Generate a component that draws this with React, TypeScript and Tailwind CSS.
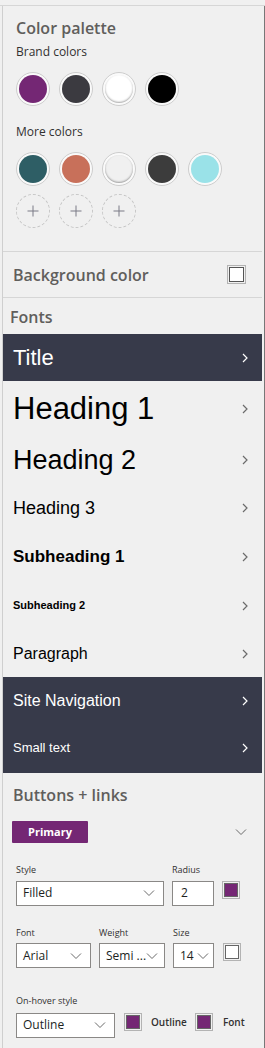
import React from "react";

const ui = { fontFamily: '"Open Sans", "Noto Sans", sans-serif' };
const arial = { fontFamily: '"Liberation Sans", Arial, sans-serif' };

const brand = ["#742774", "#3b3a40", "#ffffff", "#000000"];
const more = ["#2e5e65", "#c8705a", "#f0f0f0", "#3c3c3c", "#9ae2e8"];

const Chevron: React.FC<{ light?: boolean }> = ({ light }) => (
  <svg width="8" height="12" viewBox="0 0 8 12" className="shrink-0">
    <polyline
      points="2,2 6,6 2,10"
      fill="none"
      stroke={light ? "#ffffff" : "#6b6b6b"}
      strokeWidth="1.2"
    />
  </svg>
);

const ChevronDown: React.FC = () => (
  <svg width="12" height="8" viewBox="0 0 12 8" className="shrink-0">
    <polyline points="1,1.5 6,6.5 11,1.5" fill="none" stroke="#6b6b6b" strokeWidth="1" />
  </svg>
);

const Swatch: React.FC<{ color: string }> = ({ color }) => (
  <div className="w-[34px] h-[34px] rounded-full border border-[#cdcdcd] bg-[#fafafa] p-[2px]">
    <div
      className={
        color === "#ffffff" || color === "#f0f0f0"
          ? "w-full h-full rounded-full shadow-[inset_0_-1px_2px_rgba(0,0,0,0.35)]"
          : "w-full h-full rounded-full"
      }
      style={{ background: color }}
    />
  </div>
);

const AddSwatch: React.FC = () => (
  <div className="w-[34px] h-[34px] rounded-full border border-dashed border-[#c6c6c6] flex items-center justify-center">
    <svg width="12" height="12" viewBox="0 0 12 12">
      <path d="M6 0.5V11.5M0.5 6H11.5" stroke="#7a7a86" strokeWidth="1" />
    </svg>
  </div>
);

const FontRow: React.FC<{
  label: string;
  h: string;
  cls: string;
  dark?: boolean;
}> = ({ label, h, cls, dark }) => (
  <div className={`flex items-center justify-between pl-[10px] pr-[13px] ${h}`}>
    <span className={`${cls} ${dark ? "text-white" : "text-black"}`} style={arial}>
      {label}
    </span>
    <Chevron light={dark} />
  </div>
);

const Select: React.FC<{ value: string; w: string; px?: string }> = ({ value, w, px }) => (
  <div
    className={`${w} ${px ?? "pl-[6px] pr-[8px]"} h-[25px] bg-white border border-[#8a8886] flex items-center justify-between text-[12px] text-[#201f1e] whitespace-nowrap`}
  >
    <span>{value}</span>
    <ChevronDown />
  </div>
);

const ColorBox: React.FC<{ color: string }> = ({ color }) => (
  <div className="w-[18px] h-[18px] border border-[#b3b3b3] p-[1px] bg-[#f0f0f0]">
    <div className="w-full h-full border border-[#666]" style={{ background: color }} />
  </div>
);

export default function App() {
  return (
    <div className="w-[265px] h-[1048px] bg-[#f0f0f0] overflow-hidden pt-[5px]" style={ui}>
      <div className="border-t border-[#d6d6d6] h-full pl-[2px]">
        <div className="h-full border-l border-[#cfcfcf] border-r border-r-[#777777]">
          {/* palette */}
          <div className="pl-[13px] pt-[11px] h-[246px] border-b border-[#d6d6d6] mr-[2px]">
            <div className="text-[16px] font-semibold text-[#605e5c] leading-[22px]">Color palette</div>
            <div className="text-[12px] text-[#323130] mt-[5px] leading-[16px]">Brand colors</div>
            <div className="flex gap-[9px] mt-[12px]">
              {brand.map((c) => (
                <Swatch key={c} color={c} />
              ))}
            </div>
            <div className="text-[12px] text-[#323130] mt-[18px] leading-[16px]">More colors</div>
            <div className="flex gap-[9px] mt-[12px]">
              {more.map((c) => (
                <Swatch key={c} color={c} />
              ))}
            </div>
            <div className="flex gap-[9px] mt-[8px]">
              <AddSwatch />
              <AddSwatch />
              <AddSwatch />
            </div>
          </div>

          {/* background color */}
          <div className="h-[46px] flex items-center justify-between pl-[10px] pr-[16px] border-b border-[#d6d6d6] mr-[2px]">
            <span className="text-[16px] font-semibold text-[#605e5c]">Background color</span>
            <div className="w-[19px] h-[19px] border border-[#b3b3b3] p-[1px]">
              <div className="w-full h-full bg-white border border-[#555]" />
            </div>
          </div>

          {/* fonts */}
          <div className="h-[36px] flex items-center pl-[7px] pt-[2px] text-[16px] font-semibold text-[#605e5c]">Fonts</div>
          <div className="mr-[2px]">
            <div className="bg-[#373a4a]">
              <FontRow label="Title" h="h-[47px]" cls="text-[22px]" dark />
            </div>
            <FontRow label="Heading 1" h="h-[56px]" cls="text-[31px]" />
            <FontRow label="Heading 2" h="h-[46px]" cls="text-[27px]" />
            <FontRow label="Heading 3" h="h-[50px]" cls="text-[18px]" />
            <FontRow label="Subheading 1" h="h-[48px]" cls="text-[17px] font-bold" />
            <FontRow label="Subheading 2" h="h-[49px]" cls="text-[11px] font-bold" />
            <FontRow label="Paragraph" h="h-[47px]" cls="text-[16px]" />
            <div className="bg-[#373a4a] pb-[1px]">
              <FontRow label="Site Navigation" h="h-[47px]" cls="text-[16px]" dark />
              <FontRow label="Small text" h="h-[48px]" cls="text-[13px]" dark />
            </div>
          </div>

          {/* buttons */}
          <div className="h-[44px] flex items-center pl-[10px] text-[16px] font-semibold text-[#605e5c]">
            Buttons + links
          </div>
          <div className="flex items-center justify-between pl-[9px] pr-[17px] mt-[4px]">
            <div className="w-[76px] h-[22px] bg-[#742774] rounded-[1px] flex items-center justify-center text-white text-[11px] font-bold">
              Primary
            </div>
            <ChevronDown />
          </div>

          <div className="pl-[13px] mt-[20px]">
            <div className="flex items-end">
              <div className="w-[156px]">
                <div className="text-[9px] text-[#323130] mb-[4px]">Style</div>
                <Select value="Filled" w="w-[148px]" />
              </div>
              <div className="w-[50px]">
                <div className="text-[9px] text-[#323130] mb-[4px]">Radius</div>
                <div className="w-[42px] h-[25px] bg-white border border-[#8a8886] flex items-center pl-[8px] text-[12px] text-[#201f1e]">
                  2
                </div>
              </div>
              <div className="self-end mb-[7px]">
                <ColorBox color="#742774" />
              </div>
            </div>

            <div className="flex items-end mt-[20px]">
              <div className="w-[83px]">
                <div className="text-[9px] text-[#323130] mb-[4px]">Font</div>
                <Select value="Arial" w="w-[75px]" />
              </div>
              <div className="w-[74px]">
                <div className="text-[9px] text-[#323130] mb-[4px]">Weight</div>
                <Select value="Semi ..." w="w-[66px]" px="pl-[6px] pr-[6px]" />
              </div>
              <div className="w-[50px]">
                <div className="text-[9px] text-[#323130] mb-[4px]">Size</div>
                <Select value="14" w="w-[41px]" px="pl-[6px] pr-[4px]" />
              </div>
              <div className="self-end mb-[7px]">
                <ColorBox color="#ffffff" />
              </div>
            </div>

            <div className="text-[9px] text-[#323130] mt-[26px] mb-[5px]">On-hover style</div>
            <div className="flex items-center">
              <Select value="Outline" w="w-[99px]" />
              <div className="ml-[9px] mb-[6px]">
                <ColorBox color="#742774" />
              </div>
              <span className="ml-[9px] text-[10px] font-semibold text-[#323130] mb-[6px]">Outline</span>
              <div className="ml-[8px] mb-[6px]">
                <ColorBox color="#742774" />
              </div>
              <span className="ml-[10px] text-[10px] font-semibold text-[#323130] mb-[6px]">Font</span>
            </div>
          </div>
        </div>
      </div>
    </div>
  );
}
